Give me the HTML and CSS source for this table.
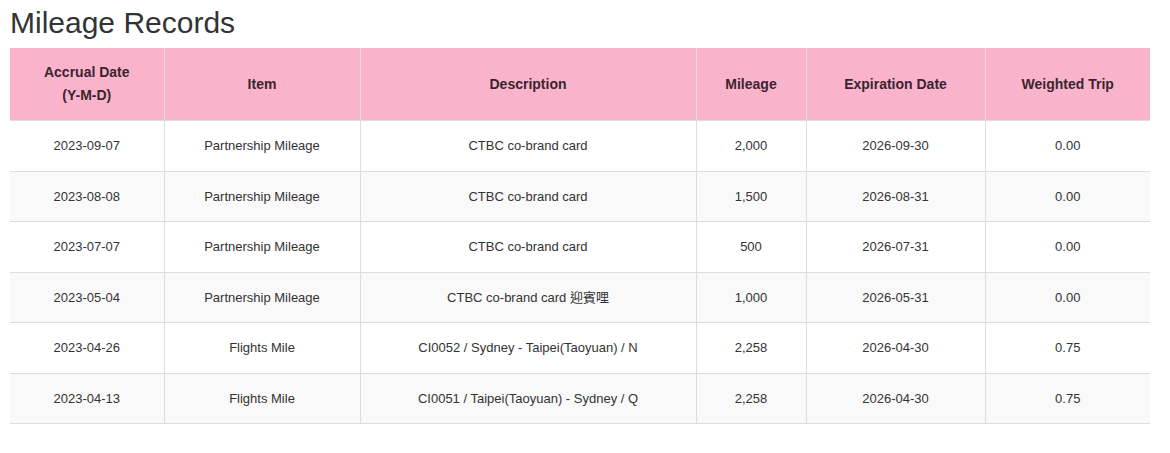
FILE: index.html
```html
<!DOCTYPE html>
<html lang="en">
<head>
<meta charset="utf-8">
<title>Mileage Records</title>
<link rel="stylesheet" href="styles.css">
</head>
<body>
<div class="page">
  <h1 class="title">Mileage Records</h1>
  <table class="records">
    <colgroup>
      <col class="c1"><col class="c2"><col class="c3"><col class="c4"><col class="c5"><col class="c6">
    </colgroup>
    <thead>
      <tr>
        <th>Accrual Date<br>(Y-M-D)</th>
        <th>Item</th>
        <th>Description</th>
        <th>Mileage</th>
        <th>Expiration Date</th>
        <th>Weighted Trip</th>
      </tr>
    </thead>
    <tbody>
      <tr><td>2023-09-07</td><td>Partnership Mileage</td><td>CTBC co-brand card</td><td>2,000</td><td>2026-09-30</td><td>0.00</td></tr>
      <tr><td>2023-08-08</td><td>Partnership Mileage</td><td>CTBC co-brand card</td><td>1,500</td><td>2026-08-31</td><td>0.00</td></tr>
      <tr><td>2023-07-07</td><td>Partnership Mileage</td><td>CTBC co-brand card</td><td>500</td><td>2026-07-31</td><td>0.00</td></tr>
      <tr><td>2023-05-04</td><td>Partnership Mileage</td><td>CTBC co-brand card 迎賓哩</td><td>1,000</td><td>2026-05-31</td><td>0.00</td></tr>
      <tr><td>2023-04-26</td><td>Flights Mile</td><td>CI0052 / Sydney - Taipei(Taoyuan) / N</td><td>2,258</td><td>2026-04-30</td><td>0.75</td></tr>
      <tr><td>2023-04-13</td><td>Flights Mile</td><td>CI0051 / Taipei(Taoyuan) - Sydney / Q</td><td>2,258</td><td>2026-04-30</td><td>0.75</td></tr>
    </tbody>
  </table>
</div>
</body>
</html>
```

FILE: styles.css
```css
html, body {
  margin: 0;
  padding: 0;
  background: #ffffff;
}

body {
  font-family: "Liberation Sans", Arial, "Noto Sans CJK TC", sans-serif;
  color: #333333;
}

.page {
  padding: 5px 20px 0 10px;
}

.title {
  margin: 0 0 8px 0;
  font-size: 30px;
  font-weight: 400;
  line-height: 35px;
  color: #333333;
}

.records {
  width: 1140px;
  border-collapse: collapse;
  table-layout: fixed;
  font-size: 13px;
}

.c1 { width: 154px; }
.c2 { width: 196px; }
.c3 { width: 336px; }
.c4 { width: 110px; }
.c5 { width: 179px; }
.c6 { width: 165px; }

.records th {
  background: #f9b4cb;
  color: #3b2430;
  font-size: 14px;
  font-weight: 700;
  text-align: center;
  vertical-align: middle;
  padding: 13px 8px;
  line-height: 23px;
  border-left: 1px solid #e6dde0;
  border-bottom: 1px solid #dddddd;
}

.records th:first-child,
.records td:first-child {
  border-left: none;
}

.records td {
  text-align: center;
  vertical-align: middle;
  padding: 15px 8px;
  line-height: 19.5px;
  border-left: 1px solid #dddddd;
  border-bottom: 1px solid #dddddd;
  color: #333333;
}

.records tbody tr:nth-child(even) td {
  background: #f9f9f9;
}
```
